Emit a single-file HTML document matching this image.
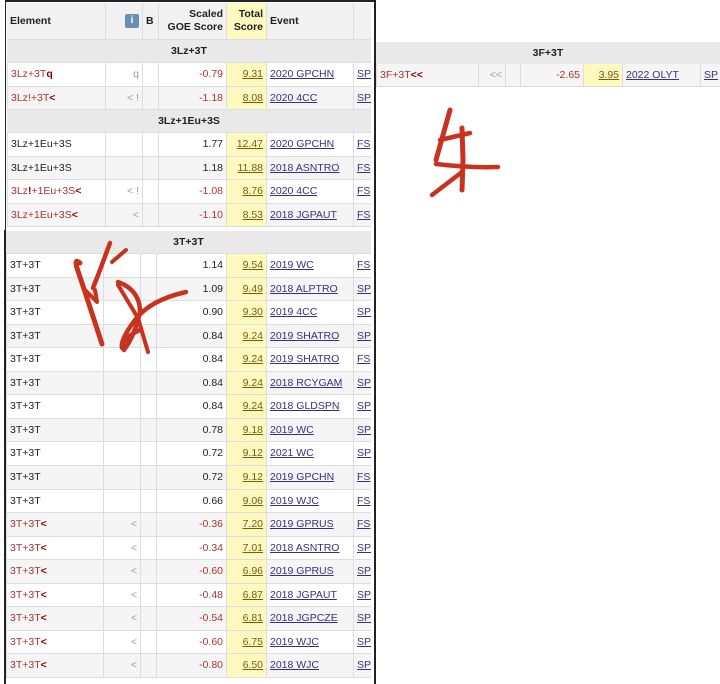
<!DOCTYPE html>
<html><head><meta charset="utf-8"><style>
body{margin:0;width:720px;height:684px;background:#fff;position:relative;overflow:hidden;font-family:"Liberation Sans Narrow","Liberation Sans",sans-serif;font-size:10.5px;color:#222}
.r{position:absolute;height:23px;border-bottom:1px solid #ddd;box-sizing:border-box}
.c{position:absolute;top:0;height:100%;line-height:22px;border-left:1px solid #ddd;box-sizing:border-box;padding:0 3px;white-space:nowrap}
.g{background:#e9e9e9;font-weight:bold;text-align:center;line-height:22px}
.y{background:#fdf9bf;text-align:right;color:#7a5a10;text-decoration:underline}
.ev{color:#33337a;text-decoration:underline}
.red{color:#a33}
b.k{color:#8b0000}
.rt{text-align:right}
.ic{color:#999;text-align:right}
</style></head><body>
<div style="position:absolute;left:5px;top:0;width:1px;height:230px;background:#222"></div>
<div style="position:absolute;left:5px;top:0;width:370px;height:2px;background:#222"></div>
<div style="position:absolute;left:374px;top:0;width:2px;height:684px;background:#222"></div>
<div style="position:absolute;left:4px;top:230px;width:2px;height:454px;background:#222"></div>
<div id="L"></div><div id="R"></div>
<script>
(function(){
function row(x,y,h,cols,cells,bg){
 var s='<div class="r" style="left:'+x+'px;top:'+y+'px;width:'+(cols[cols.length-1]-cols[0])+'px;height:'+h+'px;background:'+bg+'">';
 for(var i=0;i<cells.length;i++){var t=cells[i][0],cl=cells[i][1]||'';s+='<div class="c '+cl+'" style="left:'+(cols[i]-cols[0])+'px;width:'+(cols[i+1]-cols[i])+'px;line-height:'+(h-1)+'px">'+t+'</div>'}
 return s+'</div>';
}
function grp(x,y,w,t){return '<div class="r g" style="left:'+x+'px;top:'+y+'px;width:'+w+'px;height:23px">'+t+'</div>'}
var C=[7,105,142,158,226,266,353,371];
var h='';
h+='<div class="r" style="left:7px;top:3px;width:364px;height:37px;background:#f1f1f1;font-weight:bold">'+
'<div class="c" style="left:0;width:98px;line-height:36px;border:0">Element</div>'+
'<div class="c" style="left:98px;width:37px;"><span style="position:absolute;right:3px;top:11px;width:14px;height:14px;background:#6a8fb0;border-radius:2px;color:#fff;font-size:10px;line-height:14px;text-align:center">i</span></div>'+
'<div class="c" style="left:135px;width:16px;line-height:36px">B</div>'+
'<div class="c rt" style="left:151px;width:68px;line-height:13px;padding-top:5px">Scaled<br>GOE Score</div>'+
'<div class="c rt" style="left:219px;width:40px;line-height:13px;padding-top:5px;background:#fdf9bf">Total<br>Score</div>'+
'<div class="c" style="left:259px;width:87px;line-height:36px">Event</div>'+
'<div class="c" style="left:346px;width:18px"></div></div>';
h+=grp(7,40,364,'3Lz+3T');
var topRows=[
['<span class="red">3Lz+3T<b class="k">q</b></span>','q','-0.79','9.31','2020 GPCHN','SP',1],
['<span class="red">3Lz!+3T<b class="k">&lt;</b></span>','&lt; !','-1.18','8.08','2020 4CC','SP',1],
'3Lz+1Eu+3S',
['3Lz+1Eu+3S','','1.77','12.47','2020 GPCHN','FS',0],
['3Lz+1Eu+3S','','1.18','11.88','2018 ASNTRO','FS',0],
['<span class="red">3Lz<b class="k">!</b>+1Eu+3S<b class="k">&lt;</b></span>','&lt; !','-1.08','8.76','2020 4CC','FS',1],
['<span class="red">3Lz+1Eu+3S<b class="k">&lt;</b></span>','&lt;','-1.10','8.53','2018 JGPAUT','FS',1]];
function dr(x,cols,y,hh,d,k){return row(x,y,hh,cols,[[d[0]],[d[1],'ic'],[''],[d[2],'rt'+(d[6]?' red':'')],[d[3],'y'],[d[4],'ev'],[d[5],'ev']],k%2?'#f5f5f5':'#fff')}
var y=63,k=0;
for(var i=0;i<topRows.length;i++){var d=topRows[i];if(typeof d=='string'){h+=grp(7,Math.round(y),364,d);y+=23;k=0;continue}var a=Math.round(y),n=Math.round(y+23.5);h+=dr(7,C,a,n-a,d,k++);y+=23.5}
h+=grp(6,231,365,'3T+3T');
var b=[['1.14','9.54','2019 WC','FS'],['1.09','9.49','2018 ALPTRO','SP'],['0.90','9.30','2019 4CC','SP'],['0.84','9.24','2019 SHATRO','SP'],['0.84','9.24','2019 SHATRO','FS'],['0.84','9.24','2018 RCYGAM','SP'],['0.84','9.24','2018 GLDSPN','SP'],['0.78','9.18','2019 WC','SP'],['0.72','9.12','2021 WC','SP'],['0.72','9.12','2019 GPCHN','FS'],['0.66','9.06','2019 WJC','FS'],
['-0.36','7.20','2019 GPRUS','FS',1],['-0.34','7.01','2018 ASNTRO','SP',1],['-0.60','6.96','2019 GPRUS','SP',1],['-0.48','6.87','2018 JGPAUT','SP',1],['-0.54','6.81','2018 JGPCZE','SP',1],['-0.60','6.75','2019 WJC','SP',1],['-0.80','6.50','2018 WJC','SP',1]];
var C2=[6,103,140,156,226,266,353,371];
y=254;
for(var j=0;j<b.length;j++){var d2=b[j];var e=d2[4]?['<span class="red">3T+3T<b class="k">&lt;</b></span>','&lt;']:['3T+3T',''];var a2=Math.round(y),n2=Math.round(y+23.55);h+=dr(6,C2,a2,n2-a2,[e[0],e[1],d2[0],d2[1],d2[2],d2[3],d2[4]],j);y+=23.55}
document.getElementById('L').innerHTML=h;
var C3=[376,478,505,520,583,622,700,720];
document.getElementById('R').innerHTML=grp(376,42,344,'3F+3T')+dr(376,C3,64,23,['<span class="red">3F+3T<b class="k">&lt;&lt;</b></span>','&lt;&lt;','-2.65','3.95','2022 OLYT','SP',1],1);
})();
</script>
<svg style="position:absolute;left:0;top:0" width="720" height="684" fill="none" stroke="#c8321e" stroke-linecap="round" stroke-linejoin="round">
<path d="M80,263 Q74,258 77,268 L85,292 L102,344" stroke-width="5"/>
<path d="M85,290 L97,302 L95,290" stroke-width="4"/>
<path d="M110,243 L100,270 L93,288" stroke-width="4.5"/>
<path d="M112,262 L126,250" stroke-width="4"/>
<path d="M118,282 Q140,290 140,312 Q135,335 124,350 Q118,340 140,330" stroke-width="4.5"/>
<path d="M186,292 Q150,300 135,320 Q120,340 122,348" stroke-width="4.5"/>
<path d="M118,285 L138,318 L148,352" stroke-width="4"/>
<path d="M450,110 L443,135 L436,160" stroke-width="5"/>
<path d="M440,140 L470,133" stroke-width="4.5"/>
<path d="M436,164 Q470,168 498,167" stroke-width="4.5"/>
<path d="M462,128 L463,160 L462,190" stroke-width="5"/>
<path d="M462,172 L432,195" stroke-width="4.5"/>
</svg>
</body></html>
